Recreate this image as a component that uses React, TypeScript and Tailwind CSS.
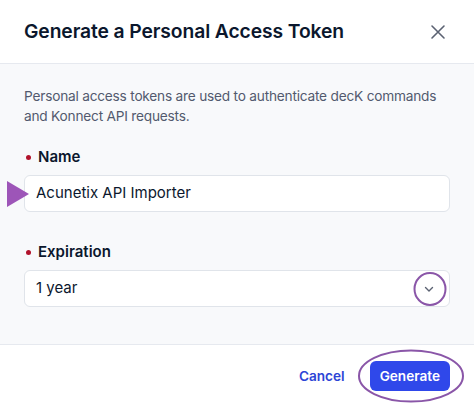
import React from "react";

export default function App() {
  return (
    <div
      className="relative w-[474px] h-[405px] bg-white overflow-hidden text-[#0b172d]"
      style={{ fontFamily: "Inter, 'Noto Sans', sans-serif" }}
    >
      <div className="flex items-center justify-between h-[64px] pl-[24px] pr-[28px] border-b border-[#e6e9ef]">
        <h1 className="text-[19.3px] font-semibold tracking-[-0.1px] text-[#0b172d]">
          Generate a Personal Access Token
        </h1>
        <svg width="16" height="16" viewBox="0 0 16 16" className="text-[#5b6272]">
          <path d="M2 2 L14 14 M14 2 L2 14" stroke="currentColor" strokeWidth="1.6" strokeLinecap="round" />
        </svg>
      </div>

      <div className="bg-[#f8f9fb] h-[281px] px-[24px] pt-[22px] border-b border-[#e6e9ef]">
        <p className="text-[13.7px] leading-[20px] tracking-[-0.22px] text-[#52596e]">
          Personal access tokens are used to authenticate decK commands and Konnect API requests.
        </p>

        <div className="mt-[21px] flex items-center gap-[7px] h-[20px]">
          <span className="w-[5px] h-[5px] rounded-full bg-[#b1122b] ml-[2px]" />
          <span className="text-[15px] font-semibold text-[#0b172d]">Name</span>
        </div>
        <div className="mt-[8px] h-[37px] rounded-[6px] border border-[#e0e4ea] bg-white flex items-center px-[11px] text-[15px] text-[#0b172d]">
          Acunetix API Importer
        </div>

        <div className="mt-[30px] flex items-center gap-[7px] h-[20px]">
          <span className="w-[5px] h-[5px] rounded-full bg-[#b1122b] ml-[2px]" />
          <span className="text-[15px] font-semibold text-[#0b172d]">Expiration</span>
        </div>
        <div className="mt-[8px] h-[37px] rounded-[6px] border border-[#e0e4ea] bg-white flex items-center justify-between pl-[11px] pr-[14px] text-[15px] text-[#0b172d]">
          <span>1 year</span>
          <svg width="12" height="12" viewBox="0 0 12 12" className="text-[#5b6272]">
            <path d="M2.5 4.5 L6 8 L9.5 4.5" fill="none" stroke="currentColor" strokeWidth="1.4" strokeLinecap="round" strokeLinejoin="round" />
          </svg>
        </div>
      </div>

      <div className="flex items-center justify-end gap-[25px] h-[62px] pr-[24px]">
        <span className="text-[13.6px] font-semibold text-[#2d44d6]">Cancel</span>
        <button className="h-[30px] px-[10px] rounded-[6px] bg-[#2f48ea] text-white text-[13.6px] font-semibold">
          Generate
        </button>
      </div>

      {/* annotations */}
      <svg className="absolute left-[6px] top-[181px]" width="24" height="26" viewBox="0 0 24 26">
        <path d="M1 0 L23 13 L1 26 Z" fill="#9d55b8" />
      </svg>
      <svg className="absolute left-[412px] top-[271px]" width="36" height="36" viewBox="0 0 36 36">
        <ellipse cx="18" cy="18" rx="15.5" ry="16" fill="none" stroke="#8a56a8" strokeWidth="2" />
      </svg>
      <svg className="absolute left-[356px] top-[348px]" width="110" height="56" viewBox="0 0 110 56">
        <ellipse cx="55" cy="28" rx="52" ry="25.5" fill="none" stroke="#8a56a8" strokeWidth="2" />
      </svg>
    </div>
  );
}
